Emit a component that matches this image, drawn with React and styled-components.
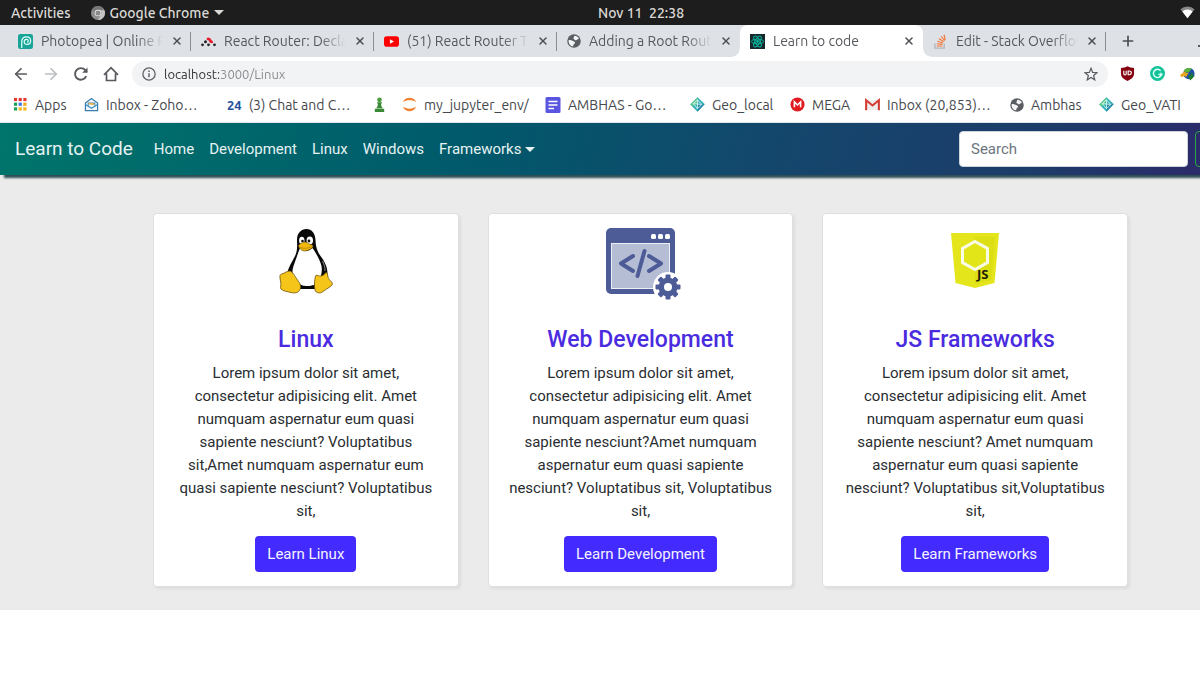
import React from "react";
import styled, { createGlobalStyle } from "styled-components";
import { ArrowLeft, ArrowRight, X, Plus } from "lucide-react";

const GlobalStyle = createGlobalStyle`
  *, *::before, *::after { box-sizing: border-box; }
  body { margin: 0; background: #fff; overflow-x: hidden; }
  a { color: inherit; text-decoration: none; }
  button { font: inherit; color: inherit; background: none; border: 0; padding: 0; cursor: pointer; }
`;

const uiFont = `Ubuntu, "Noto Sans", sans-serif`;

/* ---------- desktop bar ---------- */
const DesktopBar = styled.header`
  display: grid;
  grid-template-columns: 1fr auto 1fr;
  align-items: center;
  height: 25px;
  padding: 0 5px 0 11px;
  background: #1d1d1d;
  color: #dcdad6;
  font: 500 14px/24px ${uiFont};
  white-space: pre;
`;
const BarLeft = styled.div`
  display: flex;
  align-items: center;
  gap: 20px;
`;
const AppMenu = styled.button`
  display: flex;
  align-items: center;
  gap: 5px;
`;
const Clock = styled.time`
  margin-left: 76px;
`;
const BarRight = styled.div`
  display: flex;
  justify-content: flex-end;
`;

/* ---------- tab strip ---------- */
const TabStrip = styled.div`
  display: flex;
  height: 32px;
  padding-left: 8px;
  background: #dee1e6;
  color: #55585c;
  font: 14px/32px ${uiFont};
  overflow: hidden;
`;
const Tab = styled.div`
  display: flex;
  align-items: center;
  flex: none;
  width: 183px;
  gap: 8px;
  padding: 0 8px 0 10px;
  position: relative;
  background: ${(p) => (p.$active ? "#fff" : "transparent")};
  border-radius: 8px 8px 0 0;
  ${(p) =>
    p.$active &&
    `&::before, &::after {
      content: "";
      position: absolute;
      bottom: 0;
      width: 8px;
      height: 8px;
    }
    &::before { left: -8px; background: radial-gradient(circle at 0 0, transparent 7px, #fff 8px); }
    &::after { right: -8px; background: radial-gradient(circle at 100% 0, transparent 7px, #fff 8px); }`}
`;
const TabTitle = styled.span`
  flex: 1;
  min-width: 0;
  overflow: hidden;
  white-space: nowrap;
  mask-image: linear-gradient(to right, #000 calc(100% - 26px), transparent);
`;
const IconButton = styled.button`
  display: flex;
  flex: none;
  align-items: center;
  justify-content: center;
  color: ${(p) => p.$color || "#4c4f53"};
`;
const Divider = styled.span`
  position: absolute;
  right: 0;
  top: 7px;
  width: 1px;
  height: 19px;
  background: #8b8e93;
`;
const NewTab = styled(IconButton)`
  margin-left: 14px;
`;
const Minimise = styled(IconButton)`
  margin-left: auto;
`;

/* ---------- toolbar ---------- */
const Toolbar = styled.div`
  display: flex;
  align-items: center;
  height: 33px;
  padding: 0 5px 0 12px;
  gap: 12px;
  background: #fff;
`;
const ToolButton = styled(IconButton)`
  width: 18px;
`;
const Omnibox = styled.label`
  display: flex;
  flex: 1;
  align-items: center;
  gap: 8px;
  height: 26px;
  padding: 0 10px;
  border-radius: 13px;
  background: #f1f3f4;
`;
const Address = styled.input`
  flex: 1;
  min-width: 0;
  height: 20px;
  padding: 0;
  border: 0;
  outline: 0;
  font: 13px/20px ${uiFont};
  color: transparent;
  background: linear-gradient(to right, #2b2e31 55px, #85898d 55px);
  background-clip: text;
  -webkit-background-clip: text;
`;
const Extensions = styled.div`
  display: flex;
  align-items: center;
  gap: 15px;
`;

/* ---------- bookmarks ---------- */
const Bookmarks = styled.nav`
  display: flex;
  height: 33px;
  padding: 0 0 3px 13px;
  background: #fff;
  border-bottom: 1px solid #dfe5e8;
  color: #45484c;
  font: 14px/28px ${uiFont};
  overflow: hidden;
`;
const Bookmark = styled.a`
  display: flex;
  flex: none;
  align-items: center;
  gap: 7px;
  width: ${(p) => p.$width}px;
  white-space: nowrap;
`;
const DayMark = styled.b`
  color: #2552a0;
  font-size: 13px;
`;

/* ---------- site ---------- */
const Navbar = styled.nav`
  position: relative;
  display: flex;
  align-items: center;
  height: 52px;
  padding-left: 15px;
  overflow: hidden;
  color: #e6f3f3;
  background: linear-gradient(105deg, #00756b 0%, #005a6b 38%, #14466c 65%, #1c3c69 86%, #2b2b6a 100%);
  box-shadow: 4px 3px 2px #2f4f56;
  font: 15px/22px Roboto, sans-serif;
`;
const Brand = styled.a`
  margin-right: 21px;
  font-size: 19px;
`;
const NavList = styled.ul`
  display: flex;
  flex: 1;
  gap: 15px;
  margin: 0;
  padding: 0;
  list-style: none;
`;
const NavLink = styled.a`
  display: flex;
  align-items: center;
  gap: 4px;
`;
const Caret = styled.span`
  border: solid transparent;
  border-width: 5px 5px 0;
  border-top-color: currentColor;
`;
const SearchForm = styled.form`
  display: flex;
  flex: none;
  width: 241px;
  gap: 7px;
`;
const SearchInput = styled.input`
  flex: none;
  width: 229px;
  height: 36px;
  padding: 0 11px;
  border: 1px solid #ced4da;
  border-radius: 4px;
  background: #fff;
  font: 15px/22px Roboto, sans-serif;
  &::placeholder { color: #6c757d; opacity: 1; }
`;
const SearchButton = styled.button`
  flex: none;
  width: 74px;
  height: 36px;
  border: 1px solid #28a745;
  border-radius: 4px;
`;
const Courses = styled.main`
  display: flex;
  gap: 29px;
  padding: 38px 72px 23px 153px;
  background: #ebebeb;
`;
const Card = styled.article`
  display: flex;
  flex: 1;
  flex-direction: column;
  align-items: center;
  min-width: 0;
  padding: 14px 19px;
  border: 1px solid #dfdfdf;
  border-radius: 4px;
  background: #fff;
  box-shadow: 2px 2px 3px rgba(0, 0, 0, 0.06);
  color: #292d31;
  font: 15px/23px Roboto, sans-serif;
  text-align: center;
`;
const Picture = styled.div`
  height: 70px;
  margin-bottom: 28px;
`;
const CardTitle = styled.h2`
  margin: 0 0 9px;
  color: #4a2be0;
  font-size: 23px;
  font-weight: 500;
  line-height: 27px;
`;
const CardText = styled.p`
  flex: 1;
  margin: 0 0 13px;
`;
const CardButton = styled.button`
  height: 36px;
  padding: 0 12px;
  border-radius: 4px;
  background: #432bff;
  color: #f4f2ff;
`;

/* ---------- small icons ---------- */
const Svg = ({ s = 15, vb = "0 0 16 16", children, ...rest }) => (
  <svg width={s} height={s} viewBox={vb} fill="none" aria-hidden="true" style={{ flexShrink: 0 }} {...rest}>
    {children}
  </svg>
);
const ChromeMono = () => (
  <Svg s={14}>
    <circle cx="8" cy="8" r="8" fill="#8e8e8e" />
    <path d="M8 0a8 8 0 0 1 7 4H8a4 4 0 0 0-4 3L1.300 3.600A8 8 0 0 1 8 0z" fill="#777" />
    <path d="M15.200 4.500A8 8 0 0 1 8 16l3.500-6.200A4 4 0 0 0 11 5z" fill="#c4c4c4" />
    <circle cx="8" cy="8" r="3.800" fill="#eee" />
    <circle cx="8" cy="8" r="2.900" fill="#8a8a8a" />
  </Svg>
);
const Photopea = () => (
  <Svg>
    <rect width="16" height="16" rx="2.500" fill="#18a497" />
    <path d="M4 15V8.500C4 5 6 3 9 3s4.500 1.800 4.500 4.200S11.800 11 9.600 11 6.600 9.800 6.600 8.300 7.700 5.800 9 5.800s2 .8 2 1.700-.6 1.300-1.400 1.300" stroke="#e2fffb" strokeWidth="1.300" />
  </Svg>
);
const ReactRouter = () => (
  <Svg s={15}>
    <circle cx="1.600" cy="11.500" r="1.500" fill="#222" />
    <circle cx="4.800" cy="8.200" r="1.600" fill="#222" />
    <circle cx="8" cy="11.500" r="1.500" fill="#222" />
    <circle cx="14.400" cy="11.500" r="1.500" fill="#222" />
    <path d="M7.500 5.200c3.500-.2.800 3 3.900 3.200" stroke="#e91c2f" strokeWidth="3" strokeLinecap="round" />
  </Svg>
);
const YouTube = () => (
  <Svg>
    <rect y="2.300" width="16" height="11.400" rx="3" fill="#f00" />
    <path d="M6.300 5.500 10.700 8l-4.400 2.500z" fill="#fff" />
  </Svg>
);
const Globe = () => (
  <Svg s={14}>
    <circle cx="8" cy="8" r="7.700" fill="#5a5d61" />
    <path d="M1.800 7c1.800-.6 3.400.3 5 .9 1.500.6 2.600 1 2.300 2.300-.3 1.200-1.600 1-1.800 2.300l-.2 1.600C4 14 1.500 10.800 1.800 7z" fill="#f4f5f6" />
    <path d="M8.500 2c2.200.1 4 1.300 5 3-.4 1.300-1.700.5-2.300 1.500-.6 1-2 .8-2.500 0-.3-.7-1.500-.6-1.300-1.600.2-1.100.5-1.900 1.100-2.900z" fill="#f4f5f6" />
  </Svg>
);
const ReactIcon = () => (
  <Svg>
    <rect width="16" height="16" fill="#17272c" />
    <g stroke="#08b8a0" strokeWidth="1">
      <ellipse cx="8" cy="8" rx="6.500" ry="2.600" />
      <ellipse cx="8" cy="8" rx="6.500" ry="2.600" transform="rotate(60 8 8)" />
      <ellipse cx="8" cy="8" rx="6.500" ry="2.600" transform="rotate(120 8 8)" />
    </g>
    <circle cx="8" cy="8" r="1.500" fill="#08b8a0" />
  </Svg>
);
const StackOverflow = () => (
  <Svg>
    <path d="M2 10v5h10v-5" stroke="#b4b5b7" strokeWidth="1.400" />
    <path d="M4 12.800h6M4.100 10.400l6 .7M4.800 7.700l5.700 1.900M6.300 4.900l5 3.400M8.700 2.400l3.700 4.800M11.800.8l1.200 5.700" stroke="#f2793a" strokeWidth="1.300" />
  </Svg>
);
const Reload = () => (
  <Svg s={16} stroke="#57595d" strokeWidth="1.900">
    <path d="M13.200 10.200A5.800 5.800 0 1 1 12.300 4.200L14 6" />
    <path d="M14.500 1.500v5.300H9.200z" fill="#57595d" stroke="none" />
  </Svg>
);
const Home = () => (
  <Svg s={16} stroke="#57595d" strokeWidth="1.700">
    <path d="M1 8.800 8 1.700l7 7.100M3.500 7.500v7h9v-7" />
  </Svg>
);
const Info = () => (
  <Svg s={14} stroke="#5f6368" strokeWidth="1.500">
    <circle cx="8" cy="8" r="7" />
    <path d="M8 7.200v4.600M8 4v1.700" strokeWidth="1.700" />
  </Svg>
);
const Star = () => (
  <Svg s={14} stroke="#5a5d61" strokeWidth="1.400">
    <path d="m8 1.500 1.900 4.700 5 .3-3.900 3.200 1.300 5L8 11.900l-4.300 2.800 1.300-5L1.100 6.500l5-.3z" />
  </Svg>
);
const Shield = () => (
  <Svg>
    <path d="M8 .3C5.800 1.700 3.500 2 1 2v6c0 4 3 6 7 8 4-2 7-4 7-8V2C12.500 2 10.200 1.700 8 .3z" fill="#850410" />
    <path d="M4 5v3.200c0 1.600 2.600 1.600 2.600 0V5M8.700 5.300v4h1.200c2.900 0 2.900-4 0-4z" stroke="#fff" strokeWidth="1.200" />
  </Svg>
);
const Grammarly = () => (
  <Svg>
    <circle cx="8" cy="8" r="8" fill="#15c39a" />
    <path d="M11.300 5a4.400 4.400 0 1 0 1 4H9" stroke="#e4fff7" strokeWidth="1.500" />
    <path d="m10.800 7.300 2.400 1.600-2 1.700" stroke="#e4fff7" />
  </Svg>
);
const Idm = () => (
  <Svg>
    <circle cx="9.500" cy="8" r="6" fill="#1f4fa8" />
    <path d="M4 4.800C6 1.800 10 1.500 12.500 2.700L10 6l-4 1.500z" fill="#5bb535" />
    <path d="M0 9.500 5.500 5.500l.6 2.300L9.500 7l-3.400 5.200-1-1.700-3.300 1.500z" fill="#e9a520" />
    <path d="M8.300 10.500 11 15.500l5-5.500-2.300.3L13 6l-2.300 4z" fill="#1d7a2b" />
  </Svg>
);
const Apps = () => (
  <Svg>
    {["#e53935", "#e53935", "#e53935", "#1e9e55", "#3b78e7", "#f4a81d", "#1e9e55", "#f4b51d", "#f4b51d"].map((c, i) => (
      <rect key={i} x={1 + (i % 3) * 5} y={1 + Math.floor(i / 3) * 5} width="3.400" height="3.400" fill={c} />
    ))}
  </Svg>
);
const Zoho = () => (
  <Svg>
    <path d="M1.500 6.500 8 1.500l6.500 5v8h-13z" stroke="#3a7db0" strokeWidth="1.300" fill="#f3faff" />
    <path d="m1.500 8 6.500 4 6.500-4M4.500 9V6.500h7V9" stroke="#3a8cc5" strokeWidth="1.200" />
    <path d="M5 7.500c2-2 4 1.600 6-.4" stroke="#eeb145" strokeWidth="1.800" />
  </Svg>
);
const Pawn = () => (
  <Svg>
    <circle cx="8" cy="3" r="2.500" fill="#4d9a3f" />
    <path d="M5.500 5.500h5v1.300H9.700c0 2.500.6 3.900 2 5.200H4.300c1.400-1.300 2-2.700 2-5.200h-.8zM3 12.500h10V16H3z" fill="#388834" />
  </Svg>
);
const Jupyter = () => (
  <Svg>
    <path d="M1 5.500C3-.8 13-.8 15 5.500 11 2.900 5 2.900 1 5.500z" fill="#ef8233" />
    <path d="M1 10.500c2 6.300 12 6.300 14 0-4 2.600-10 2.600-14 0z" fill="#ef8233" />
  </Svg>
);
const Form = () => (
  <Svg s={16}>
    <rect x=".5" width="15" height="16" rx="1.500" fill="#5a55e0" />
    <path d="M3.500 4.500h9M3.500 8h9M3.500 11.500h5.500" stroke="#fff" strokeWidth="1.700" />
  </Svg>
);
const Geo = () => (
  <Svg>
    <path d="m8 .3 7.700 7.200L8 15.700.3 8z" fill="#35b3ba" />
    <path d="M8 .3v6L2.500 10 .3 8z" fill="#63c990" />
    <path d="m8 8 7.700-.5L8 15.700z" fill="#2584a8" />
    <path d="M3.500 7 8 3l4.500 5L8 12.500zM8 3v9.500M3.500 7l9 1" stroke="#d4f5ee" strokeWidth=".9" />
  </Svg>
);
const Mega = () => (
  <Svg>
    <circle cx="8" cy="8" r="7.500" fill="#e01b1f" />
    <path d="M4.700 11V5.300L8 8.500l3.300-3.200V11" stroke="#fff" strokeWidth="1.700" />
  </Svg>
);
const Gmail = () => (
  <Svg>
    <path d="M1 3h14v11H1z" fill="#eeeeef" />
    <path d="M1.200 14V3.500L8 9l6.800-5.500V14" stroke="#d43c34" strokeWidth="2.200" />
  </Svg>
);
const Wifi = () => (
  <Svg s={15}>
    <path d="M.5 4.500a11 11 0 0 1 15 0L8 14z" fill="#888" />
    <path d="M2.500 6.800a8.500 8.500 0 0 1 11 0L8 14z" fill="#fff" />
  </Svg>
);

/* ---------- card pictures ---------- */
const Tux = () => (
  <svg width="58" height="70" viewBox="0 0 58 70" aria-hidden="true">
    <path d="M20 12C20 5 24 1 29.500 1S38 5 38.500 12c.3 8 2 12 6.500 18 4 6 6 11 5.500 19L44 61H17L10 49c0-8 4-13 7.500-20 2.800-5 2.800-9 2.500-17z" fill="#090909" />
    <path d="M23 20c4 4 8 4 12.500 0 3.500 5 7.500 12 9 18 1 5-.5 10-1.500 13-2 5-6 7-13 7-5 0-9-2-11.500-6-3-4-4-8-2-14 2-5 4-12 6.500-18z" fill="#fff" />
    <ellipse cx="24.800" cy="12.500" rx="2.700" ry="3.800" fill="#fff" />
    <ellipse cx="32.800" cy="12.500" rx="3.200" ry="4" fill="#fff" />
    <circle cx="25.500" cy="13" r="1.300" fill="#111" />
    <circle cx="32" cy="13" r="1.400" fill="#111" />
    <path d="M21.500 17.500c3-3.500 7-4.500 10-2 2 1.500 4.500 1.200 4.500 2.700 0 2.300-6 4.800-8.500 4.800s-6-3-6-5.500z" fill="#f2b90c" stroke="#5b4505" strokeWidth=".6" />
    <path d="M22.500 18.800c3.500 2.300 8 1.800 12-.3" stroke="#a97e06" strokeWidth=".8" fill="none" />
    <path d="M5 46c3-1 5-3 7.500-3 3 .2 5.500 5.500 8 9 2.500 3 4 6.500 2.500 9.500-1 3-5 4-9 3-4-1-8-1.500-10-3.500-1.200-1.500.5-4-.3-7-.5-2.500-1-5-.7-6.500.3-1 1-1.200 2-1.500z" fill="#f6c51a" stroke="#6b5208" strokeWidth=".8" />
    <path d="M38.500 48c-1 4-1.500 10-.5 14 1 3 5 4 8 1.500 3-2.500 7-4 9-6.500 1.500-2.500-2-4-3.500-6.500-1.200-3-.5-6-2.500-6-1.500 2-4 4-6.500 3.500-1.500-.3-3.500-1.500-4 0z" fill="#f6c51a" stroke="#6b5208" strokeWidth=".8" />
    <path d="M45.500 33c2 4 2.700 7 2.500 10" stroke="#aaa" strokeWidth=".8" fill="none" />
  </svg>
);
const CodeWindow = () => (
  <svg width="84" height="72" viewBox="-6 0 84 72" aria-hidden="true">
    <rect x="1" width="69" height="66" rx="5" fill="#4d5b97" />
    <g fill="#fff">
      <rect x="46" y="6" width="5" height="5" rx="1.500" />
      <rect x="53" y="6" width="5" height="5" rx="1.500" />
      <rect x="60" y="6" width="5" height="5" rx="1.500" />
    </g>
    <rect x="6.500" y="15.500" width="58" height="45" fill="#b5bdd5" stroke="#eef0f8" />
    <path d="M28 28 16 35.500 28 43M44 28l12 7.500L44 43M39.500 23l-7 25" fill="none" stroke="#4d5b97" strokeWidth="4" strokeLinecap="round" strokeLinejoin="round" />
    <circle cx="63" cy="59" r="15" fill="#fff" />
    <g transform="translate(63 59)" fill="#4d5b97">
      {[0, 45, 90, 135, 180, 225, 270, 315].map((a) => (
        <rect key={a} x="-2.500" y="-12.500" width="5" height="7" rx="1" transform={`rotate(${a})`} />
      ))}
      <circle r="9.500" />
      <circle r="4" fill="#fff" />
    </g>
  </svg>
);
const JsBadge = () => (
  <svg width="50" height="70" viewBox="0 0 50 70" aria-hidden="true">
    <path d="M1 5h48l-4.500 50L25 60 5.500 55z" fill="#e4e61b" />
    <path d="M25 8.500h20L41.500 52 25 56z" fill="#dbdf14" />
    <path d="M25 13.500 37.500 20.500v14L25 41.500l-12.500-7v-14z" fill="#e2e517" stroke="#f8fbe6" strokeWidth="3" />
    <text x="27" y="51" fontFamily="Open Sans, sans-serif" fontWeight="700" fontSize="13" fill="#1c1c08">JS</text>
  </svg>
);

/* ---------- data ---------- */
const tabs = [
  { title: "Photopea | Online Photo Editor", icon: <Photopea />, divider: true },
  { title: "React Router: Declarative Routing", icon: <ReactRouter />, divider: true },
  { title: "(51) React Router Tutorial", icon: <YouTube />, divider: true },
  { title: "Adding a Root Route", icon: <Globe /> },
  { title: "Learn to code", icon: <ReactIcon />, active: true },
  { title: "Edit - Stack Overflow", icon: <StackOverflow />, divider: true },
];
const bookmarks = [
  { text: "Apps", icon: <Apps />, width: 71 },
  { text: "Inbox - Zoho…", icon: <Zoho />, width: 143 },
  { text: "(3) Chat and C…", icon: <DayMark>24</DayMark>, width: 145 },
  { text: "", label: "Chess", icon: <Pawn />, width: 30 },
  { text: "my_jupyter_env/", icon: <Jupyter />, width: 143 },
  { text: "AMBHAS - Go…", icon: <Form />, width: 145 },
  { text: "Geo_local", icon: <Geo />, width: 100 },
  { text: "MEGA", icon: <Mega />, width: 75 },
  { text: "Inbox (20,853)…", icon: <Gmail />, width: 145 },
  { text: "Ambhas", icon: <Globe />, width: 89 },
  { text: "Geo_VATI", icon: <Geo />, width: 100 },
];
const cards = [
  {
    title: "Linux",
    picture: <Tux />,
    text: "Lorem ipsum dolor sit amet, consectetur adipisicing elit. Amet numquam aspernatur eum quasi sapiente nesciunt? Voluptatibus sit,Amet numquam aspernatur eum quasi sapiente nesciunt? Voluptatibus sit,",
    action: "Learn Linux",
  },
  {
    title: "Web Development",
    picture: <CodeWindow />,
    text: "Lorem ipsum dolor sit amet, consectetur adipisicing elit. Amet numquam aspernatur eum quasi sapiente nesciunt?Amet numquam aspernatur eum quasi sapiente nesciunt? Voluptatibus sit, Voluptatibus sit,",
    action: "Learn Development",
  },
  {
    title: "JS Frameworks",
    picture: <JsBadge />,
    text: "Lorem ipsum dolor sit amet, consectetur adipisicing elit. Amet numquam aspernatur eum quasi sapiente nesciunt? Amet numquam aspernatur eum quasi sapiente nesciunt? Voluptatibus sit,Voluptatibus sit,",
    action: "Learn Frameworks",
  },
];

export default function App() {
  return (
    <>
      <GlobalStyle />
      <DesktopBar>
        <BarLeft>
          <button type="button">Activities</button>
          <AppMenu type="button">
            <ChromeMono />
            Google Chrome
            <Caret />
          </AppMenu>
        </BarLeft>
        <Clock>{"Nov 11  22:38"}</Clock>
        <BarRight>
          <Wifi />
        </BarRight>
      </DesktopBar>

      <TabStrip>
        {tabs.map((t) => (
          <Tab key={t.title} $active={t.active}>
            {t.icon}
            <TabTitle>{t.title}</TabTitle>
            <IconButton type="button" aria-label={`Close ${t.title}`}>
              <X size={12} strokeWidth={3} />
            </IconButton>
            {t.divider && <Divider />}
          </Tab>
        ))}
        <NewTab type="button" aria-label="New tab">
          <Plus size={16} strokeWidth={2.5} />
        </NewTab>
        <Minimise type="button" aria-label="Minimise">
          <svg width="2" height="16" viewBox="0 0 2 16" aria-hidden="true">
            <path d="M0 12h2v2H0z" fill="#55585c" />
          </svg>
        </Minimise>
      </TabStrip>

      <Toolbar>
        <ToolButton type="button" aria-label="Back" $color="#57595d">
          <ArrowLeft size={18} strokeWidth={2.3} />
        </ToolButton>
        <ToolButton type="button" aria-label="Forward" $color="#babcbe">
          <ArrowRight size={18} strokeWidth={2.3} />
        </ToolButton>
        <ToolButton type="button" aria-label="Reload">
          <Reload />
        </ToolButton>
        <ToolButton type="button" aria-label="Home">
          <Home />
        </ToolButton>
        <Omnibox>
          <Info />
          <Address aria-label="Address" defaultValue="localhost:3000/Linux" />
          <Star />
        </Omnibox>
        <Extensions>
          <Shield />
          <Grammarly />
          <Idm />
        </Extensions>
      </Toolbar>

      <Bookmarks aria-label="Bookmarks">
        {bookmarks.map((b) => (
          <Bookmark key={b.text} href="#" $width={b.width} aria-label={b.label}>
            {b.icon}
            {b.text}
          </Bookmark>
        ))}
      </Bookmarks>

      <Navbar>
        <Brand href="#">Learn to Code</Brand>
        <NavList>
          {["Home", "Development", "Linux", "Windows"].map((l) => (
            <li key={l}>
              <NavLink href="#">{l}</NavLink>
            </li>
          ))}
          <li>
            <NavLink href="#">
              Frameworks
              <Caret />
            </NavLink>
          </li>
        </NavList>
        <SearchForm>
          <SearchInput type="search" placeholder="Search" aria-label="Search" />
          <SearchButton type="submit" aria-label="Submit search" />
        </SearchForm>
      </Navbar>

      <Courses>
        {cards.map((c) => (
          <Card key={c.title}>
            <Picture>{c.picture}</Picture>
            <CardTitle>{c.title}</CardTitle>
            <CardText>{c.text}</CardText>
            <CardButton type="button">{c.action}</CardButton>
          </Card>
        ))}
      </Courses>
    </>
  );
}
